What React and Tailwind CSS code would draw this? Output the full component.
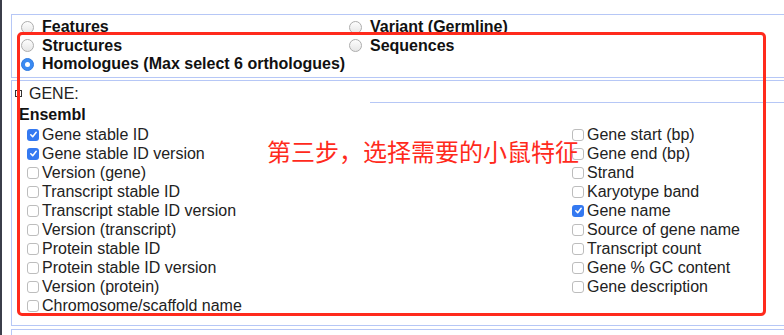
import React from "react";

function Radio({ checked }) {
  if (checked) {
    return (
      <span className="flex h-[13px] w-[13px] shrink-0 items-center justify-center rounded-full bg-[#3a8af2] border border-[#2f7ae0]">
        <span className="h-[5px] w-[5px] rounded-full bg-white" />
      </span>
    );
  }
  return (
    <span className="h-[13px] w-[13px] shrink-0 rounded-full border border-[#adadad] bg-gradient-to-b from-[#fdfdfd] to-[#e6e6e6]" />
  );
}

function Check({ checked }) {
  if (checked) {
    return (
      <span className="flex h-[12px] w-[12px] shrink-0 items-center justify-center rounded-[3px] bg-[#3479f1]">
        <svg width="9" height="9" viewBox="0 0 10 10">
          <path d="M2 5.3 L4.1 7.4 L8 2.6" fill="none" stroke="white" strokeWidth="1.7" strokeLinecap="round" strokeLinejoin="round" />
        </svg>
      </span>
    );
  }
  return <span className="h-[12px] w-[12px] shrink-0 rounded-[3px] border border-[#bdbdbd] bg-white" />;
}

function RadioRow({ label, checked }) {
  return (
    <div className="flex h-[18.5px] items-center">
      <Radio checked={checked} />
      <span className="ml-[8px] whitespace-nowrap font-bold text-[16px] leading-[18px] text-[#111]">{label}</span>
    </div>
  );
}

function CheckRow({ label, checked }) {
  return (
    <div className="flex h-[19px] items-center">
      <Check checked={checked} />
      <span className="ml-[3px] whitespace-nowrap text-[16px] leading-[19px] text-[#222]">{label}</span>
    </div>
  );
}

const left = [
  ["Gene stable ID", true],
  ["Gene stable ID version", true],
  ["Version (gene)", false],
  ["Transcript stable ID", false],
  ["Transcript stable ID version", false],
  ["Version (transcript)", false],
  ["Protein stable ID", false],
  ["Protein stable ID version", false],
  ["Version (protein)", false],
  ["Chromosome/scaffold name", false],
];

const right = [
  ["Gene start (bp)", false],
  ["Gene end (bp)", false],
  ["Strand", false],
  ["Karyotype band", false],
  ["Gene name", true],
  ["Source of gene name", false],
  ["Transcript count", false],
  ["Gene % GC content", false],
  ["Gene description", false],
];

export default function App() {
  return (
    <div
      className="relative h-[335px] w-[784px] overflow-hidden border-l-2 border-[#3b3d4a] bg-white"
      style={{ fontFamily: '"Liberation Sans", Arial, "Noto Sans CJK SC", sans-serif' }}
    >
      <div className="ml-[9px] pt-[14px]">
        {/* Box 1: radio options */}
        <div className="flex h-[64px] border border-r-0 border-[#b6c7f6] pt-[3px]">
          <div className="flex w-[337px] flex-col pl-[9px]">
            <RadioRow label="Features" />
            <RadioRow label="Structures" />
            <RadioRow label="Homologues (Max select 6 orthologues)" checked />
          </div>
          <div className="flex flex-col">
            <RadioRow label="Variant (Germline)" />
            <RadioRow label="Sequences" />
          </div>
        </div>

        {/* Box 2: attributes */}
        <div className="mt-[2px] h-[246px] border border-r-0 border-[#b6c7f6] pt-[3px]">
          <div className="flex h-[19px] items-center">
            <div className="flex items-center pl-[3px]">
              <span className="flex h-[7px] w-[7px] items-center justify-center border border-[#333]">
                <span className="h-[1px] w-[3px] bg-[#333]" />
              </span>
              <span className="ml-[7px] text-[16px] leading-[19px] text-[#222]">GENE:</span>
            </div>
            <div className="ml-[291px] h-[19px] flex-1 border-b border-[#b6c7f6]" />
          </div>
          <div className="h-[22px] pl-[7px] pt-[2px] text-[16px] font-bold leading-[20px] text-[#111]">Ensembl</div>
          <div className="flex">
            <div className="flex w-[560px] flex-col pl-[15px]">
              {left.map(([l, c]) => (
                <CheckRow key={l} label={l} checked={c} />
              ))}
            </div>
            <div className="flex flex-col">
              {right.map(([l, c]) => (
                <CheckRow key={l} label={l} checked={c} />
              ))}
            </div>
          </div>
        </div>

        {/* Box 3 */}
        <div className="mt-[3px] h-[20px] border border-r-0 border-[#b6c7f6]" />
      </div>

      {/* Annotation overlay */}
      <div className="pointer-events-none absolute left-[15px] top-[32px] h-[284px] w-[749px] rounded-[5px] border-[3px] border-[#ff2a1c]" />
      <div
        className="pointer-events-none absolute left-[265px] top-[139px] whitespace-nowrap text-[24px] leading-[24px] text-[#ff2a1c]"
        style={{ fontFamily: '"Noto Sans CJK SC", sans-serif' }}
      >
        第三步，选择需要的小鼠特征
      </div>
    </div>
  );
}
